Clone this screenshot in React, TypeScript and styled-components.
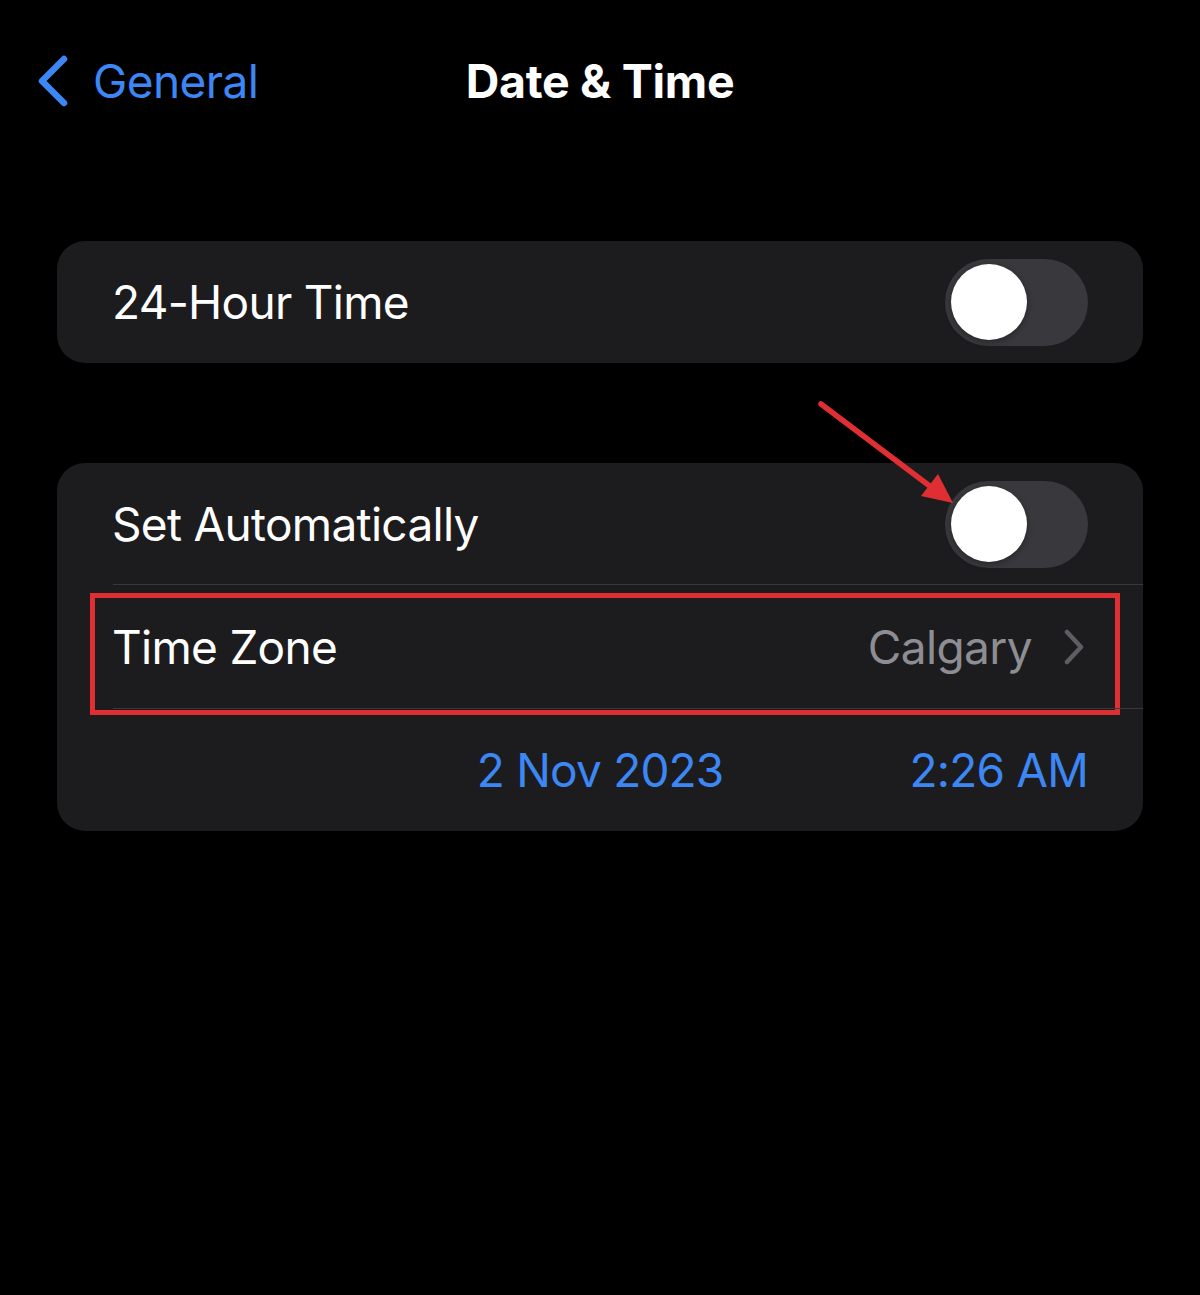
import React from "react";
import styled, { createGlobalStyle } from "styled-components";

const Global = createGlobalStyle`
  html, body { margin: 0; padding: 0; background: #000; }
  body { font-family: Inter, "Noto Sans", "Liberation Sans", sans-serif; -webkit-font-smoothing: antialiased; }
`;

const Screen = styled.div`
  width: 1200px;
  height: 1295px;
  background: #000;
  color: #fff;
  position: relative;
  overflow: hidden;
`;

const NavBar = styled.header`
  height: 162px;
  display: grid;
  grid-template-columns: 1fr auto 1fr;
  align-items: center;
  padding: 0 0 0 36px;
  box-sizing: border-box;
`;

const Back = styled.div`
  display: flex;
  align-items: center;
  gap: 23px;
  color: #3d87f5;
  font-size: 46px;
  letter-spacing: -0.6px;
`;

const Title = styled.h1`
  margin: 0;
  font-size: 46.5px;
  font-weight: 700;
  letter-spacing: -0.3px;
  color: #fff;
  transform: translateX(-18px);
`;

const Content = styled.main`
  display: flex;
  flex-direction: column;
  gap: 100px;
  padding: 79px 57px 0;
`;

const Card = styled.section`
  background: #1c1c1e;
  border-radius: 28px;
  position: relative;
`;

const Row = styled.div<{ $divider?: boolean; $tall?: boolean }>`
  height: ${(p) => (p.$tall ? 124 : 122)}px;
  display: flex;
  align-items: center;
  padding: 0 55px 0 55px;
  position: relative;
  &::after {
    content: "";
    display: ${(p) => (p.$divider ? "block" : "none")};
    position: absolute;
    left: 56px;
    right: 0;
    bottom: 0;
    height: 1.5px;
    background: #38383a;
  }
`;

const Label = styled.span`
  flex: 1;
  font-size: 46px;
  letter-spacing: -0.7px;
  color: #fff;
`;

const Value = styled.span`
  font-size: 46px;
  letter-spacing: -0.6px;
  color: #8d8d93;
`;

const Track = styled.div<{ $on?: boolean }>`
  width: 143px;
  height: 87px;
  border-radius: 44px;
  background: ${(p) => (p.$on ? "#34c759" : "#39393d")};
  position: relative;
`;

const Knob = styled.div`
  position: absolute;
  top: 5.5px;
  left: 6px;
  width: 76px;
  height: 76px;
  border-radius: 50%;
  background: #fff;
  box-shadow: 0 2px 6px rgba(0, 0, 0, 0.35);
`;

const DateRow = styled(Row)`
  justify-content: flex-end;
  gap: 186px;
`;

const Link = styled.span`
  font-size: 46px;
  letter-spacing: -0.8px;
  color: #3d87f5;
`;

const Highlight = styled.div`
  position: absolute;
  left: 33px;
  right: 23px;
  top: 8px;
  height: 122px;
  border: 5px solid #e02f33;
  box-sizing: border-box;
  pointer-events: none;
`;

const ArrowLayer = styled.svg`
  position: absolute;
  left: 0;
  top: 0;
  pointer-events: none;
`;

const Toggle = ({ on }: { on?: boolean }) => (
  <Track $on={on}>
    <Knob />
  </Track>
);

const Chevron = () => (
  <svg width="24" height="36" viewBox="0 0 24 36" style={{ marginLeft: 30, marginRight: 2 }}>
    <path d="M5 3 L19 18 L5 33" fill="none" stroke="#5e5e62" strokeWidth="4.5" strokeLinecap="round" strokeLinejoin="round" />
  </svg>
);

const BackChevron = () => (
  <svg width="34" height="52" viewBox="0 0 34 52">
    <path d="M28 4 L6 26 L28 48" fill="none" stroke="#3d87f5" strokeWidth="6.5" strokeLinecap="round" strokeLinejoin="round" />
  </svg>
);

export default function App() {
  return (
    <>
      <Global />
      <Screen>
        <NavBar>
          <Back>
            <BackChevron />
            <span>General</span>
          </Back>
          <Title>Date &amp; Time</Title>
          <div />
        </NavBar>
        <Content>
          <Card>
            <Row>
              <Label>24-Hour Time</Label>
              <Toggle />
            </Row>
          </Card>
          <Card>
            <Row $divider>
              <Label>Set Automatically</Label>
              <Toggle />
            </Row>
            <Row $divider $tall>
              <Label>Time Zone</Label>
              <Value>Calgary</Value>
              <Chevron />
              <Highlight />
            </Row>
            <DateRow>
              <Link>2 Nov 2023</Link>
              <Link>2:26 AM</Link>
            </DateRow>
          </Card>
        </Content>
        <ArrowLayer width="1200" height="1295" viewBox="0 0 1200 1295">
          <line x1="821" y1="404" x2="935" y2="490" stroke="#e02f33" strokeWidth="5.5" strokeLinecap="round" />
          <polygon points="953,503 921,496 938,474" fill="#e02f33" />
        </ArrowLayer>
      </Screen>
    </>
  );
}
